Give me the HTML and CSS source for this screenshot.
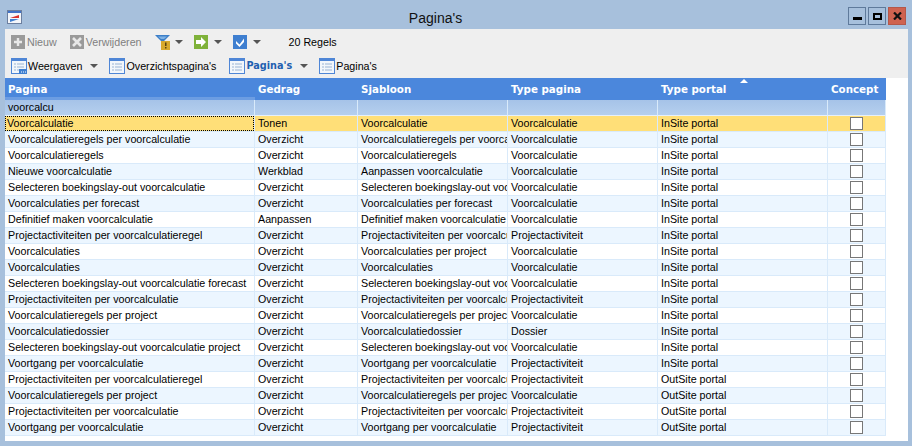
FILE: index.html
```html
<!DOCTYPE html>
<html lang="nl">
<head>
<meta charset="utf-8">
<title>Pagina's</title>
<link rel="stylesheet" href="styles.css">
</head>
<body>
<div class="window">
  <div class="titlebar">
    <svg class="appicon" width="15" height="14" viewBox="0 0 15 14"><rect x="0.5" y="0.5" width="14" height="13" fill="#f4f6fa" stroke="#6c7f9f"/><rect x="1" y="1" width="13" height="2" fill="#3f72c8"/><path d="M3 8h9V5z" fill="#d8322e"/><path d="M3 9h9L3 12z" fill="#3f7fd0"/></svg>
    <div class="title">Pagina's</div>
    <div class="winbtns">
      <div class="winbtn"><span class="glyph-min"></span></div>
      <div class="winbtn"><span class="glyph-max"></span></div>
      <div class="winbtn close"><svg width="9" height="8" viewBox="0 0 9 8"><path d="M1 0.5l7 7M8 0.5l-7 7" stroke="#111" stroke-width="2.2" fill="none"/></svg></div>
    </div>
  </div>
  <div class="content">
    <div class="toolbars">
      <div class="bar bar1">
        <div class="tool muted"><svg width="14" height="14" viewBox="0 0 14 14"><rect width="14" height="14" fill="#9a9a9a"/><path d="M7 3v8M3 7h8" stroke="#e8e8e8" stroke-width="2.4"/></svg><span>Nieuw</span></div>
        <div class="tool muted"><svg width="14" height="14" viewBox="0 0 14 14"><rect width="14" height="14" fill="#9a9a9a"/><path d="M3 3l8 8M11 3l-8 8" stroke="#e8e8e8" stroke-width="2.6"/></svg><span>Verwijderen</span></div>
        <div class="tool drop"><svg width="16" height="16" viewBox="0 0 16 16"><path d="M0 1h15L9 7v3H6V7z" fill="#3d7fc8"/><path d="M3 2.500h9L9 5H6z" fill="#7fb2e4"/><rect x="6" y="7" width="9" height="9" fill="#d7a92e"/><path d="M10 8.500h1.500v3.500H10zM10 13h1.500v1.500H10z" fill="#5a4410"/></svg><i class="caret filter-caret"></i></div>
        <div class="tool drop"><svg width="14" height="14" viewBox="0 0 14 14"><rect width="14" height="14" fill="#7fb23a"/><path d="M2 5h5V2l5 5-5 5V9H2z" fill="#fff"/></svg><i class="caret"></i></div>
        <div class="tool drop"><svg width="14" height="14" viewBox="0 0 14 14"><rect width="14" height="14" fill="#3f7fd0"/><path d="M3 6l3.500 3.500L11 3.500v3.500L6.500 12 3 8.500z" fill="#fff"/></svg><i class="caret"></i></div>
        <div class="count">20 Regels</div>
      </div>
      <div class="bar bar2">
        <div class="tool"><svg class="list" width="16" height="16" viewBox="0 0 16 16"><use href="#list"/><rect x="8" y="11" width="8" height="5" fill="#3f7fd0"/><path d="M10 14h1M12 14h1M14 14h1" stroke="#fff"/></svg><span>Weergaven</span><i class="caret after-text"></i></div>
        <div class="tool wide"><svg width="16" height="16" viewBox="0 0 16 16"><use href="#list"/></svg><span>Overzichtspagina's</span></div>
        <div class="tool active"><svg width="16" height="16" viewBox="0 0 16 16"><use href="#list"/></svg><span>Pagina's</span><i class="caret after-text"></i></div>
        <div class="tool"><svg width="16" height="16" viewBox="0 0 16 16"><use href="#list"/></svg><span>Pagina's</span></div>
      </div>
    </div>
    <svg class="defs" width="0" height="0"><defs><g id="list"><rect x="0.500" y="0.500" width="15" height="15" fill="#f2f6fb" stroke="#4f86d6"/><rect x="1" y="1" width="14" height="2" fill="#4f86d6"/><path d="M3 6h2M3 9h2M3 12h2M6 6h7M6 9h7M6 12h7" stroke="#9ab4d4"/></g></defs></svg>
    <div class="gridwrap">
      <table class="grid">
        <colgroup><col class="c1"><col class="c2"><col class="c3"><col class="c4"><col class="c5"><col class="c6"></colgroup>
        <thead>
          <tr><th class="grouped">Pagina</th><th>Gedrag</th><th>Sjabloon</th><th>Type pagina</th><th class="sorted">Type portal<i class="sort"></i></th><th class="end">Concept</th></tr>
          <tr class="filter"><td>voorcalcu</td><td></td><td></td><td></td><td></td><td></td></tr>
        </thead>
        <tbody>
          <tr class="sel"><td class="focus"><div>Voorcalculatie</div></td><td>Tonen</td><td>Voorcalculatie</td><td>Voorcalculatie</td><td>InSite portal</td><td class="center"><i class="check"></i></td></tr>
          <tr><td>Voorcalculatieregels per voorcalculatie</td><td>Overzicht</td><td>Voorcalculatieregels per voorcalculatie</td><td>Voorcalculatie</td><td>InSite portal</td><td class="center"><i class="check"></i></td></tr>
          <tr><td>Voorcalculatieregels</td><td>Overzicht</td><td>Voorcalculatieregels</td><td>Voorcalculatie</td><td>InSite portal</td><td class="center"><i class="check"></i></td></tr>
          <tr><td>Nieuwe voorcalculatie</td><td>Werkblad</td><td>Aanpassen voorcalculatie</td><td>Voorcalculatie</td><td>InSite portal</td><td class="center"><i class="check"></i></td></tr>
          <tr><td>Selecteren boekingslay-out voorcalculatie</td><td>Overzicht</td><td>Selecteren boekingslay-out voorcalculatie</td><td>Voorcalculatie</td><td>InSite portal</td><td class="center"><i class="check"></i></td></tr>
          <tr><td>Voorcalculaties per forecast</td><td>Overzicht</td><td>Voorcalculaties per forecast</td><td>Voorcalculatie</td><td>InSite portal</td><td class="center"><i class="check"></i></td></tr>
          <tr><td>Definitief maken voorcalculatie</td><td>Aanpassen</td><td>Definitief maken voorcalculatie</td><td>Voorcalculatie</td><td>InSite portal</td><td class="center"><i class="check"></i></td></tr>
          <tr><td>Projectactiviteiten per voorcalculatieregel</td><td>Overzicht</td><td>Projectactiviteiten per voorcalculatieregel</td><td>Projectactiviteit</td><td>InSite portal</td><td class="center"><i class="check"></i></td></tr>
          <tr><td>Voorcalculaties</td><td>Overzicht</td><td>Voorcalculaties per project</td><td>Voorcalculatie</td><td>InSite portal</td><td class="center"><i class="check"></i></td></tr>
          <tr><td>Voorcalculaties</td><td>Overzicht</td><td>Voorcalculaties</td><td>Voorcalculatie</td><td>InSite portal</td><td class="center"><i class="check"></i></td></tr>
          <tr><td>Selecteren boekingslay-out voorcalculatie forecast</td><td>Overzicht</td><td>Selecteren boekingslay-out voorcalculatie</td><td>Voorcalculatie</td><td>InSite portal</td><td class="center"><i class="check"></i></td></tr>
          <tr><td>Projectactiviteiten per voorcalculatie</td><td>Overzicht</td><td>Projectactiviteiten per voorcalculatie</td><td>Projectactiviteit</td><td>InSite portal</td><td class="center"><i class="check"></i></td></tr>
          <tr><td>Voorcalculatieregels per project</td><td>Overzicht</td><td>Voorcalculatieregels per project</td><td>Voorcalculatie</td><td>InSite portal</td><td class="center"><i class="check"></i></td></tr>
          <tr><td>Voorcalculatiedossier</td><td>Overzicht</td><td>Voorcalculatiedossier</td><td>Dossier</td><td>InSite portal</td><td class="center"><i class="check"></i></td></tr>
          <tr><td>Selecteren boekingslay-out voorcalculatie project</td><td>Overzicht</td><td>Selecteren boekingslay-out voorcalculatie</td><td>Voorcalculatie</td><td>InSite portal</td><td class="center"><i class="check"></i></td></tr>
          <tr><td>Voortgang per voorcalculatie</td><td>Overzicht</td><td>Voortgang per voorcalculatie</td><td>Projectactiviteit</td><td>InSite portal</td><td class="center"><i class="check"></i></td></tr>
          <tr><td>Projectactiviteiten per voorcalculatieregel</td><td>Overzicht</td><td>Projectactiviteiten per voorcalculatieregel</td><td>Projectactiviteit</td><td>OutSite portal</td><td class="center"><i class="check"></i></td></tr>
          <tr><td>Voorcalculatieregels per project</td><td>Overzicht</td><td>Voorcalculatieregels per project</td><td>Voorcalculatie</td><td>OutSite portal</td><td class="center"><i class="check"></i></td></tr>
          <tr><td>Projectactiviteiten per voorcalculatie</td><td>Overzicht</td><td>Projectactiviteiten per voorcalculatie</td><td>Projectactiviteit</td><td>OutSite portal</td><td class="center"><i class="check"></i></td></tr>
          <tr><td>Voortgang per voorcalculatie</td><td>Overzicht</td><td>Voortgang per voorcalculatie</td><td>Projectactiviteit</td><td>OutSite portal</td><td class="center"><i class="check"></i></td></tr>
        </tbody>
      </table>
    </div>
  </div>
</div>
</body>
</html>
```
FILE: styles.css
```css
* { box-sizing: border-box; }
html, body { margin: 0; padding: 0; }
body { width: 912px; height: 446px; overflow: hidden; background: #a7c0dc; font: 10.7px "Liberation Sans", Arial, sans-serif; color: #000; }
.window { height: 446px; display: flex; flex-direction: column; padding: 0 4px 5px 5px; }
.titlebar { height: 29px; flex: none; display: flex; align-items: center; position: relative; padding: 0 0 0 2px; margin-right: -4px; }
.appicon { margin-top: 4px; }
.title { position: absolute; left: 0; right: 46px; top: 10px; text-align: center; font-size: 14px; line-height: 16px; color: #111; }
.winbtns { margin-left: auto; display: flex; gap: 2px; padding-right: 6px; margin-top: 3px; position: relative; }
.winbtn { width: 18px; height: 18px; border: 1px solid #5f7a9b; display: flex; align-items: center; justify-content: center; }
.winbtn.close { background: #cf6350; border-color: #b4584a; }
.glyph-min { width: 9px; height: 3px; background: #000; margin-top: 5px; }
.glyph-max { width: 9px; height: 7px; border: 2px solid #000; }
.content { flex: 1; background: #fff; display: flex; flex-direction: column; min-height: 0; }
.toolbars { height: 49px; flex: none; background: #efefef; padding-left: 6px; }
.bar { display: flex; align-items: center; }
.bar1 { height: 25px; }
.bar2 { height: 23px; }
.tool { display: flex; align-items: center; gap: 2px; white-space: nowrap; }
.bar1 .tool { margin-right: 13px; }
.bar1 .tool.drop { margin-right: 11px; }
.bar2 .tool { margin-right: 11px; gap: 1px; }
.bar2 .tool.wide { margin-right: 13px; }
.muted { color: #808080; }
.active { color: #1f5fb0; font-weight: bold; font-family: "DejaVu Sans", sans-serif; font-size: 9.7px; }
.caret { display: inline-block; width: 0; height: 0; border-left: 4px solid transparent; border-right: 4px solid transparent; border-top: 4px solid #555; margin-left: 4px; }
.filter-caret { margin-left: 2px; }
.after-text { margin-left: 7px; }
.count { margin-left: 17px; }
.defs { position: absolute; }
.gridwrap { flex: 1; min-height: 0; }
.grid { border-collapse: separate; border-spacing: 0; table-layout: fixed; width: 881px; }
.c1 { width: 250px; } .c2 { width: 103px; } .c3 { width: 150px; } .c4 { width: 150px; } .c5 { width: 170px; } .c6 { width: 58px; }
th { height: 22px; background: #4b87dc; color: #fff; font-weight: bold; text-align: left; padding: 0 3px; font-size: 10.3px; overflow: hidden; white-space: nowrap; font-family: "DejaVu Sans", sans-serif; }
th.grouped { box-shadow: inset 0 -3px 0 #6c9de2; }
th.end { text-align: right; padding-right: 8px; }
.sorted { position: relative; }
.sort { position: absolute; right: 80px; top: 1px; width: 0; height: 0; border-left: 4px solid transparent; border-right: 4px solid transparent; border-bottom: 4px solid #fff; }
td { height: 16px; padding: 0 3px; line-height: 15px; overflow: hidden; white-space: nowrap; border-right: 1px solid #d9eafa; border-bottom: 1px solid #d9eafa; vertical-align: middle; }
.filter td { background: linear-gradient(#a6c3e8, #b5cfee); border-right-color: #d9eafa; border-bottom-color: #e6f0fb; }
tbody tr:nth-child(even) td { background: #ecf6ff; }
tbody tr.sel td { background: #ffdf78; }
td.focus { padding: 0; }
td.focus div { height: 15px; padding: 0 2px; outline: 1px dotted #000; outline-offset: -1px; }
td.center { text-align: center; padding: 0; }
.check { display: inline-block; width: 13px; height: 13px; border: 1px solid #777; background: #fff; vertical-align: top; margin-top: 1px; }
```
